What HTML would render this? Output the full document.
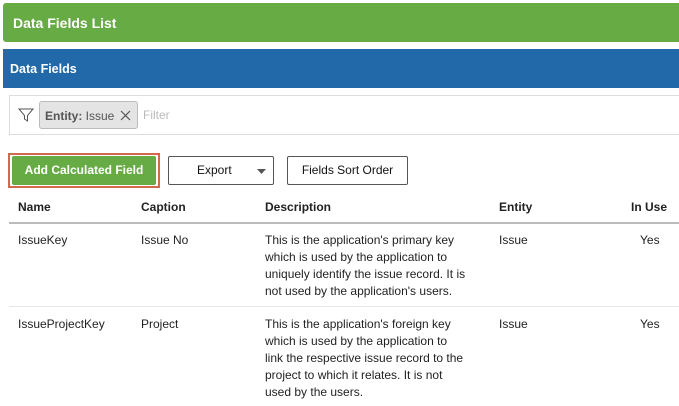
<!DOCTYPE html>
<html><head><style>
body{margin:0;width:679px;height:406px;overflow:hidden;background:#fff;font-family:"Liberation Sans",sans-serif;font-size:12px;color:#222;position:relative}
.abs{position:absolute}
.green{left:3px;top:3px;width:680px;height:39px;background:#67ab45;border-radius:3px}
.green span{position:absolute;left:10px;top:12px;color:#fff;font-weight:bold;font-size:14px}
.blue{left:3px;top:49px;width:680px;height:39px;background:#2169a8}
.blue span{position:absolute;left:7px;top:13px;color:#fff;font-weight:bold;font-size:12.5px}
.filter{left:9px;top:95px;width:680px;height:40px;border:1px solid #ddd;box-sizing:border-box}
.tag{left:39px;top:101px;width:99px;height:28px;background:#e4e4e4;border:1px solid #bbb;border-radius:3px;box-sizing:border-box;color:#555}
.btn{top:156px;height:29px;border:1px solid #555;border-radius:2px;box-sizing:border-box;font-size:12px;line-height:27px;text-align:center;background:#fff;color:#111}
.th{top:200px;font-weight:bold;font-size:12px;color:#222}
.td{font-size:12px;line-height:17px;color:#222}
</style></head><body>
<div class="abs green"><span>Data Fields List</span></div>
<div class="abs blue"><span>Data Fields</span></div>
<div class="abs filter"></div>
<svg class="abs" style="left:18px;top:107px" width="16" height="16" viewBox="0 0 16 16"><path d="M1 2h14L9.5 8.5V14L6.5 12V8.5Z" fill="none" stroke="#555" stroke-width="1"/></svg>
<div class="abs tag"><span style="position:absolute;left:5px;top:7px"><b style="color:#555">Entity:</b> Issue</span>
<svg style="position:absolute;left:80px;top:8px" width="11" height="11"><path d="M1 1L10 10M10 1L1 10" stroke="#555" stroke-width="1.2"/></svg></div>
<div class="abs" style="left:143px;top:108px;color:#bbb">Filter</div>
<div class="abs" style="left:8px;top:153px;width:152px;height:35px;border:2px solid #d2694b;box-sizing:border-box"></div>
<div class="abs btn" style="left:12px;width:144px;background:#67ab45;border-color:#67ab45;color:#fff;font-weight:bold">Add Calculated Field</div>
<div class="abs btn" style="left:168px;width:106px;text-align:left;padding-left:28px">Export<svg style="position:absolute;left:88px;top:12px" width="9" height="5"><path d="M0 0h9L4.5 5Z" fill="#555"/></svg></div>
<div class="abs btn" style="left:287px;width:121px">Fields Sort Order</div>
<div class="abs th" style="left:18px">Name</div>
<div class="abs th" style="left:141px">Caption</div>
<div class="abs th" style="left:265px">Description</div>
<div class="abs th" style="left:499px">Entity</div>
<div class="abs th" style="left:631px">In Use</div>
<div class="abs" style="left:9px;top:222px;width:680px;height:2px;background:#bbb"></div>
<div class="abs td" style="left:18px;top:232px">IssueKey</div>
<div class="abs td" style="left:141px;top:232px">Issue No</div>
<div class="abs td" style="left:265px;top:232px;width:230px">This is the application's primary key<br>which is used by the application to<br>uniquely identify the issue record. It is<br>not used by the application's users.</div>
<div class="abs td" style="left:499px;top:232px">Issue</div>
<div class="abs td" style="left:640px;top:232px">Yes</div>
<div class="abs" style="left:9px;top:306px;width:680px;height:1px;background:#e6e6e6"></div>
<div class="abs td" style="left:18px;top:316px">IssueProjectKey</div>
<div class="abs td" style="left:141px;top:316px">Project</div>
<div class="abs td" style="left:265px;top:316px;width:230px">This is the application's foreign key<br>which is used by the application to<br>link the respective issue record to the<br>project to which it relates. It is not<br>used by the users.</div>
<div class="abs td" style="left:499px;top:316px">Issue</div>
<div class="abs td" style="left:640px;top:316px">Yes</div>
</body></html>
